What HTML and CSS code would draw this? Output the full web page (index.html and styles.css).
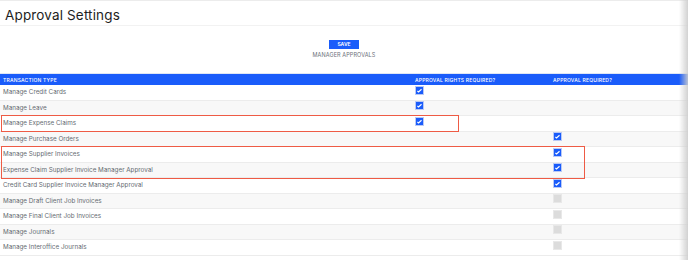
FILE: index.html
```html
<!DOCTYPE html>
<html lang="en">
<head>
    <meta charset="UTF-8">
    <title>Approval Settings</title>
    <link rel="stylesheet" href="styles.css">
</head>
<body>
    <div class="page">
        <h1 class="title">Approval Settings</h1>
        <div class="actions">
            <button class="save-btn">SAVE</button>
            <div class="section-name">MANAGER APPROVALS</div>
        </div>

        <div class="grid">
            <div class="row head">
                <div class="cell">TRANSACTION TYPE</div>
                <div class="cell">APPROVAL RIGHTS REQUIRED?</div>
                <div class="cell">APPROVAL REQUIRED?</div>
            </div>
            <div class="row">
                <div class="cell">Manage Credit Cards</div>
                <div class="cell"><span class="box on"></span></div>
                <div class="cell"></div>
            </div>
            <div class="row">
                <div class="cell">Manage Leave</div>
                <div class="cell"><span class="box on"></span></div>
                <div class="cell"></div>
            </div>
            <div class="row">
                <div class="cell">Manage Expense Claims</div>
                <div class="cell"><span class="box on"></span></div>
                <div class="cell"></div>
            </div>
            <div class="row">
                <div class="cell">Manage Purchase Orders</div>
                <div class="cell"></div>
                <div class="cell"><span class="box on"></span></div>
            </div>
            <div class="row">
                <div class="cell">Manage Supplier Invoices</div>
                <div class="cell"></div>
                <div class="cell"><span class="box on"></span></div>
            </div>
            <div class="row">
                <div class="cell">Expense Claim Supplier Invoice Manager Approval</div>
                <div class="cell"></div>
                <div class="cell"><span class="box on"></span></div>
            </div>
            <div class="row">
                <div class="cell">Credit Card Supplier Invoice Manager Approval</div>
                <div class="cell"></div>
                <div class="cell"><span class="box on"></span></div>
            </div>
            <div class="row">
                <div class="cell">Manage Draft Client Job Invoices</div>
                <div class="cell"></div>
                <div class="cell"><span class="box off"></span></div>
            </div>
            <div class="row">
                <div class="cell">Manage Final Client Job Invoices</div>
                <div class="cell"></div>
                <div class="cell"><span class="box off"></span></div>
            </div>
            <div class="row">
                <div class="cell">Manage Journals</div>
                <div class="cell"></div>
                <div class="cell"><span class="box off"></span></div>
            </div>
            <div class="row">
                <div class="cell">Manage Interoffice Journals</div>
                <div class="cell"></div>
                <div class="cell"><span class="box off"></span></div>
            </div>

            <!-- review highlights -->
            <div class="mark mark-one"></div>
            <div class="mark mark-two"></div>
        </div>
    </div>
    <div class="edge"></div>
</body>
</html>
```

FILE: styles.css
```css
body {
    margin: 0;
    background: #ffffff;
    font-family: Inter, "Noto Sans", sans-serif;
    color: #666b72;
    overflow: hidden;
}
.page {
    border-top: 1px solid #ececec;
}
.title {
    margin: 0;
    padding: 7px 5px 2px;
    font-size: 13.5px;
    line-height: 15px;
    font-weight: 400;
    color: #1e1e1e;
    border-bottom: 1px solid #f2f2f2;
    letter-spacing: 0.15px;
}
.actions {
    display: flex;
    flex-direction: column;
    align-items: center;
    padding-top: 14px;
    height: 33px;
}
.save-btn {
    width: 30px;
    height: 9px;
    padding: 0;
    border: none;
    background: #1a5cfa;
    color: #ffffff;
    font-family: inherit;
    font-size: 5px;
    font-weight: 600;
    line-height: 9px;
}
.section-name {
    margin-top: 3px;
    font-size: 5.5px;
    letter-spacing: 0.1px;
    color: #6b7079;
}
.grid {
    position: relative;
    border-top: 1px solid #dfe6f5;
}
.row {
    display: grid;
    grid-template-columns: 412px 138px 1fr;
    height: 15.5px;
    border-bottom: 1px solid #ececec;
    box-sizing: border-box;
    align-items: center;
}
.row:nth-child(odd) {
    background: #f8f8f8;
}
.row.head {
    height: 11px;
    background: #1a5cfa;
    border-bottom: none;
    color: #ffffff;
    font-weight: 500;
}
.cell {
    padding-left: 3px;
    font-size: 6.3px;
    white-space: nowrap;
    display: flex;
    align-items: center;
}
.head .cell {
    font-size: 5px;
    letter-spacing: 0.2px;
}
.box {
    display: inline-block;
    width: 7px;
    height: 7px;
    margin-top: -4px;
    border: 0.5px solid #b9c9f5;
    box-sizing: content-box;
}
.box.on {
    background: #1a5cfa url("data:image/svg+xml;utf8,<svg xmlns='http://www.w3.org/2000/svg' viewBox='0 0 8 8'><path d='M1.6 4.6l1.3 1.1 3.4-3.1' fill='none' stroke='white' stroke-width='1.3'/></svg>") center / 7px 7px no-repeat;
}
.box.off {
    background: #dcdcdc;
    border-color: #e8e8e8;
}
.mark {
    position: absolute;
    left: 1px;
    border: 1px solid #ee5b45;
    box-sizing: border-box;
}
.mark-one {
    top: 41px;
    width: 458px;
    height: 17px;
}
.mark-two {
    top: 72px;
    width: 584px;
    height: 33px;
}
.edge {
    position: fixed;
    top: 0;
    right: 0;
    width: 9px;
    height: 100%;
    background: linear-gradient(to right, rgba(220, 220, 220, 0), rgba(205, 205, 205, 0.9));
}
```
